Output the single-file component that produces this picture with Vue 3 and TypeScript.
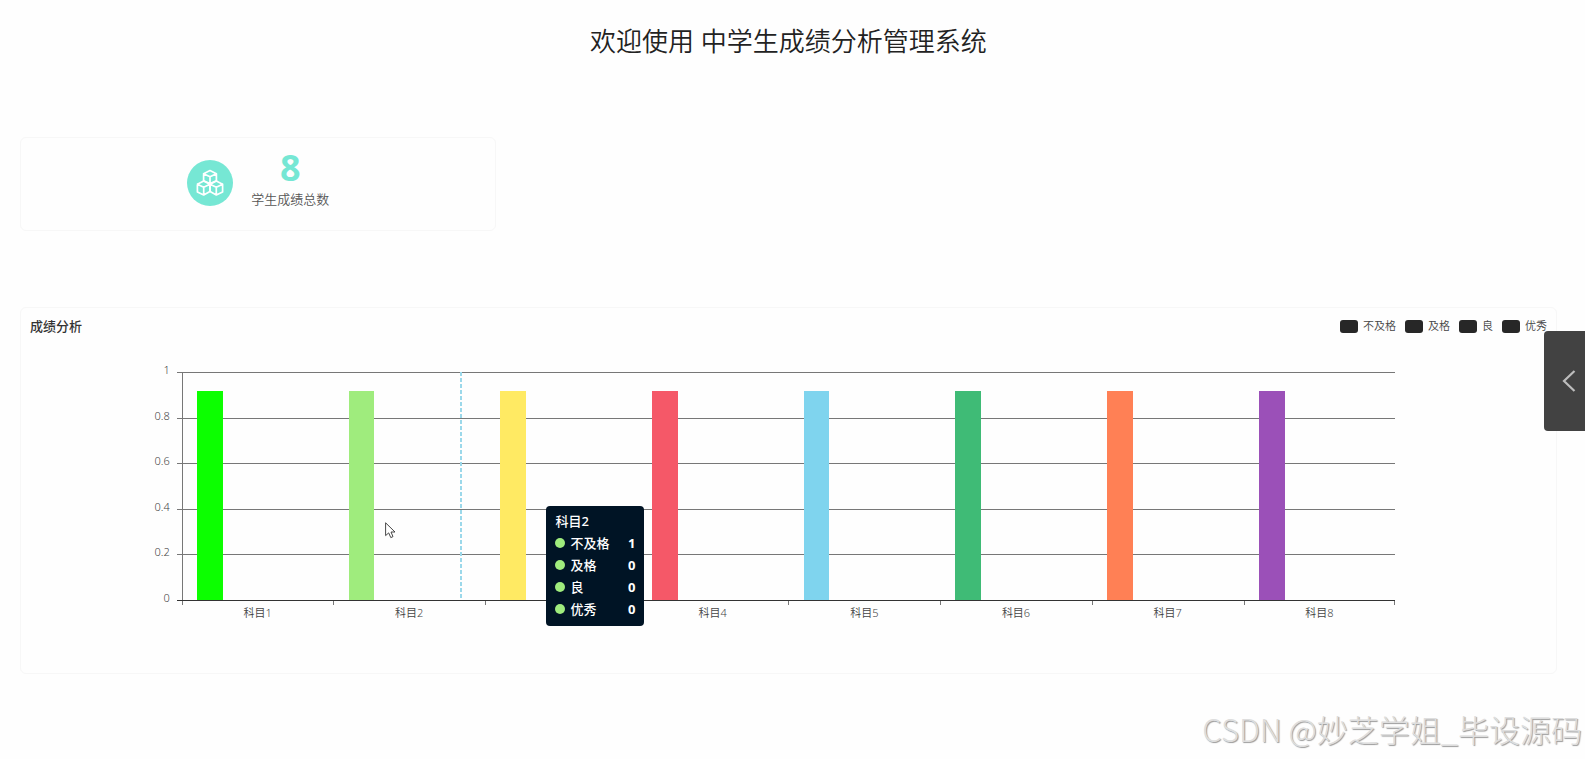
<script setup lang="ts">
interface Bar {
  label: string
  value: number
  color: string
}

interface TooltipRow {
  name: string
  count: number
}

const grades: string[] = ['不及格', '及格', '良', '优秀']
const ticks: string[] = ['1', '0.8', '0.6', '0.4', '0.2', '0']

const bars: Bar[] = [
  { label: '科目1', value: 91.5, color: '#0cff00' },
  { label: '科目2', value: 91.5, color: '#9fec7d' },
  { label: '', value: 91.5, color: '#ffea63' },
  { label: '科目4', value: 91.5, color: '#f55868' },
  { label: '科目5', value: 91.5, color: '#7fd4ee' },
  { label: '科目6', value: 91.5, color: '#3fbb76' },
  { label: '科目7', value: 91.5, color: '#ff8055' },
  { label: '科目8', value: 91.5, color: '#9b50b8' },
]

const tooltipRows: TooltipRow[] = grades.map((name, i) => ({ name, count: i === 0 ? 1 : 0 }))
</script>

<template>
  <main class="page">
    <h1 class="title">欢迎使用 中学生成绩分析管理系统</h1>

    <section class="card stat">
      <span class="stat-icon">
        <svg viewBox="0 0 28 28" width="28" height="28" aria-hidden="true">
          <g fill="none" stroke="#fff" stroke-width="1.7" stroke-linejoin="round" stroke-linecap="round">
            <path d="M14 1.6 L20.4 4.8 V11.8 L14 14.6 L7.6 11.8 V4.8 Z M7.6 4.8 L14 7.8 L20.4 4.8 M14 7.8 V14.4" />
            <path d="M7.7 12 L13.9 15.2 V22.6 L7.7 26 L1.4 23 V15.2 Z M1.4 15.2 L7.7 18.2 L13.9 15.2 M7.7 18.2 V26" />
            <path d="M20.3 12 L26.6 15.2 V23 L20.3 26 L14.1 22.6 V15.2 Z M14.1 15.2 L20.3 18.2 L26.6 15.2 M20.3 18.2 V26" />
          </g>
        </svg>
      </span>
      <div class="stat-text">
        <strong class="stat-value">8</strong>
        <span class="stat-label">学生成绩总数</span>
      </div>
    </section>

    <section class="card chart">
      <header class="chart-head">
        <h2 class="chart-title">成绩分析</h2>
        <ul class="legend">
          <li v-for="grade in grades" :key="grade"><i class="swatch"></i>{{ grade }}</li>
        </ul>
      </header>

      <div class="chart-body">
        <div class="y-axis">
          <span v-for="tick in ticks" :key="tick">{{ tick }}</span>
        </div>
        <div class="plot">
          <div class="grid-lines">
            <i v-for="tick in ticks" :key="tick"></i>
          </div>
          <div class="bars">
            <div v-for="bar in bars" :key="bar.color" class="slot">
              <div class="bar" :style="{ height: bar.value + '%', background: bar.color }"></div>
            </div>
          </div>
          <div class="pointer-line"></div>
          <div class="tooltip" role="tooltip">
            <div class="tooltip-title">科目2</div>
            <div v-for="row in tooltipRows" :key="row.name" class="tooltip-row">
              <i class="dot"></i>
              <span>{{ row.name }}</span>
              <b>{{ row.count }}</b>
            </div>
          </div>
          <svg class="cursor" viewBox="0 0 11 17" width="11" height="17" aria-hidden="true">
            <path
              d="M0.6 0.8 V13.6 L3.7 10.9 L5.8 15.6 L8 14.6 L6 10 H10 Z"
              fill="#fff"
              stroke="#333"
              stroke-width="0.9"
              stroke-linejoin="round"
            />
          </svg>
        </div>
        <div class="x-axis">
          <span v-for="bar in bars" :key="bar.color">{{ bar.label }}</span>
        </div>
      </div>
    </section>

    <button class="drawer" type="button" aria-label="展开">
      <svg viewBox="0 0 14 22" width="14" height="22" aria-hidden="true">
        <path d="M12.5 1 L2 11 L12.5 21" fill="none" stroke="#bdbdbd" stroke-width="2.2" />
      </svg>
    </button>
    <div class="watermark">CSDN @妙芝学姐_毕设源码</div>
  </main>
</template>

<style>
body {
  margin: 0;
  background: #fefefe;
}
</style>

<style scoped>
.page {
  position: relative;
  box-sizing: border-box;
  min-height: 100vh;
  padding: 21px 28px 20px 20px;
  font-family: 'Noto Sans', 'Noto Sans CJK SC', sans-serif;
  color: #333;
}

.title {
  margin: 0 0 76px;
  font-size: 26px;
  font-weight: 350;
  line-height: 40px;
  text-align: center;
  color: #222;
}

.card {
  box-sizing: border-box;
  border: 1px solid #f7f7f7;
  border-radius: 6px;
  background: #fefefe;
}

.stat {
  display: flex;
  align-items: center;
  justify-content: center;
  gap: 18px;
  width: 31%;
  height: 94px;
  margin-bottom: 76px;
  padding-bottom: 2px;
}

.stat-icon {
  display: flex;
  align-items: center;
  justify-content: center;
  width: 46px;
  height: 46px;
  border-radius: 50%;
  background: #76e7d4;
}

.stat-text {
  display: flex;
  flex-direction: column;
  align-items: center;
  padding-bottom: 6px;
}

.stat-value {
  font-size: 36px;
  line-height: 38px;
  color: #76e7d4;
}

.stat-label {
  font-size: 13px;
  font-weight: 350;
  line-height: 24px;
  color: #555;
}

.chart {
  height: 367px;
  padding: 9px;
}

.chart-head {
  display: flex;
  align-items: center;
  justify-content: space-between;
  height: 18px;
}

.chart-title {
  margin: 0;
  font-size: 13px;
  font-weight: 500;
  line-height: 18px;
  color: #333;
}

.legend {
  display: flex;
  gap: 9px;
  margin: 0;
  padding: 0;
  list-style: none;
  font-size: 11px;
  font-weight: 350;
  line-height: 18px;
  color: #444;
}

.legend li {
  display: flex;
  align-items: center;
  gap: 5px;
}

.swatch {
  width: 18px;
  height: 13px;
  border-radius: 3px;
  background: #272727;
}

.chart-body {
  display: grid;
  grid-template-columns: 10% 80% 10%;
  grid-template-rows: 229px auto;
  margin-top: 37px;
  font-size: 11px;
  font-weight: 350;
  color: #444;
}

.y-axis {
  display: flex;
  flex-direction: column;
  justify-content: space-between;
  margin: -10px 12px -5px 0;
  line-height: 16px;
  text-align: right;
}

.plot {
  position: relative;
  box-sizing: border-box;
  border-left: 1px solid #777;
}

.grid-lines {
  display: flex;
  flex-direction: column;
  justify-content: space-between;
  height: 100%;
  margin-left: -6px;
}

.grid-lines i {
  height: 1px;
  background: #777;
}

.grid-lines i:last-child {
  background: #333;
}

.bars {
  position: absolute;
  inset: 0 0 1px -1px;
  display: grid;
  grid-template-columns: repeat(8, 1fr);
}

.slot {
  display: flex;
  align-items: flex-end;
}

.bar {
  width: 17%;
  margin-left: 10%;
}

.pointer-line {
  position: absolute;
  top: 0;
  bottom: 1px;
  left: 23%;
  width: 2px;
  margin-left: -2px;
  background: repeating-linear-gradient(#9bd8ea 0 4px, transparent 4px 6px);
}

.tooltip {
  position: absolute;
  top: 134px;
  left: 30%;
  box-sizing: border-box;
  width: 98px;
  padding: 4px 9px 6px;
  border-radius: 4px;
  background: #001425;
  font-size: 13px;
  font-weight: 500;
  line-height: 22px;
  color: #fff;
}

.tooltip-row {
  display: flex;
  align-items: center;
}

.dot {
  width: 10px;
  height: 10px;
  margin-right: 5px;
  border-radius: 50%;
  background: #9fec7d;
}

.tooltip-row b {
  margin-left: auto;
  font-weight: 700;
}

.cursor {
  position: absolute;
  top: 150px;
  left: 202px;
}

.x-axis {
  display: grid;
  grid-column: 2;
  grid-template-columns: repeat(8, 1fr);
  line-height: 16px;
  text-align: center;
  background: linear-gradient(#777, #777) right top / 1px 4px no-repeat;
}

.x-axis span {
  padding: 4px 0;
  background: linear-gradient(#777, #777) left top / 1px 4px no-repeat;
}

.drawer {
  position: absolute;
  top: 331px;
  right: 0;
  display: flex;
  align-items: center;
  justify-content: flex-end;
  width: 41px;
  height: 100px;
  padding: 0 9px;
  border: 0;
  border-radius: 4px 0 0 4px;
  background: #424242;
}

.watermark {
  position: absolute;
  right: 3px;
  bottom: 8px;
  font-family: 'Noto Sans CJK SC', sans-serif;
  font-size: 31px;
  font-weight: 300;
  line-height: 44px;
  color: #dedede;
  text-shadow: 1px 1px 1px #999;
  white-space: nowrap;
}
</style>
